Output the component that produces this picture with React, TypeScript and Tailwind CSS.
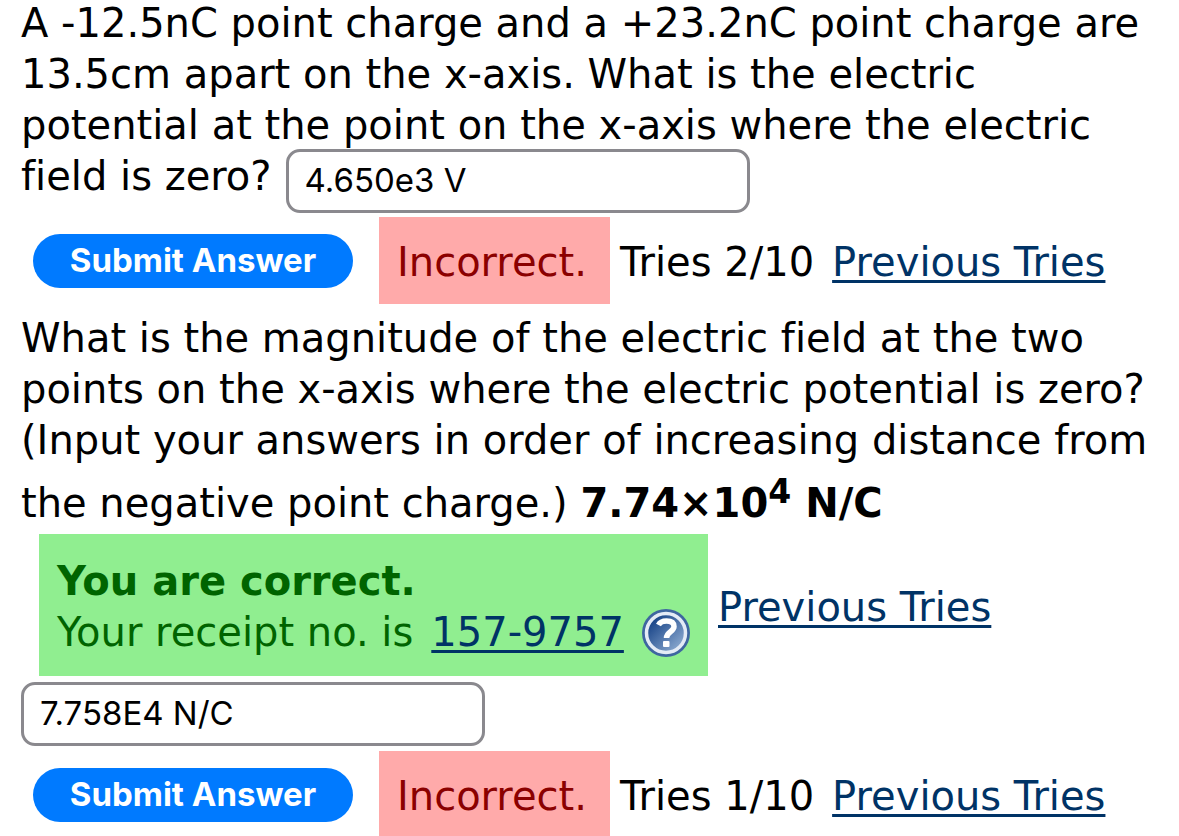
interface AnswerInputProps {
  id: string;
  label: string;
  value: string;
}

interface TriesRowProps {
  tries: string;
}

function AnswerInput({ id, label, value }: AnswerInputProps) {
  return (
    <input
      id={id}
      type="text"
      aria-label={label}
      defaultValue={value}
      className="
      h-16
      w-[464px]
      min-w-0
      rounded-[14px]
      border-3
      border-[#8a898e]
      bg-white
      px-4
      pb-0.5
      font-['Inter',sans-serif]
      text-[33px]
      leading-10
      text-black
      "
    />
  );
}

function TextLink({ children }: { children: string }) {
  return (
    <a
      href="#"
      className="
      text-[#003366]
      underline
      decoration-3
      underline-offset-4
      "
    >
      {children}
    </a>
  );
}

function TriesRow({ tries }: TriesRowProps) {
  return (
    <div className="flex items-baseline pl-3">
      <button
        type="submit"
        className="
        mr-[26px]
        h-[54px]
        w-80
        self-center
        rounded-full
        bg-[#007aff]
        pb-0.5
        font-['Inter',sans-serif]
        text-[33px]
        leading-10
        font-bold
        text-white
        "
      >
        Submit Answer
      </button>

      <div
        className="
        mr-[10px]
        w-[231px]
        bg-[#ffaaaa]
        px-[18px]
        pt-5
        pb-4
        text-[#8b0000]
        "
      >
        Incorrect.
      </div>

      <p className="flex gap-[18px]">
        <span>Tries {tries}</span>
        <TextLink>Previous Tries</TextLink>
      </p>
    </div>
  );
}

function HelpIcon() {
  return (
    <svg
      viewBox="0 0 48 48"
      className="size-12"
      role="img"
      aria-label="Help"
    >
      <defs>
        <linearGradient id="help-fill" x1="0" y1="0" x2="1" y2="1">
          <stop offset="0.2" stopColor="#1f4a8c" />
          <stop offset="1" stopColor="#9fbbdc" />
        </linearGradient>
      </defs>
      <circle cx="24" cy="24" r="24" fill="#3e66a0" />
      <circle cx="24" cy="24" r="19.5" fill="url(#help-fill)" stroke="#e4ebf6" strokeWidth="3.5" />
      <path
        d="M16.500 16c1.500-3 4.500-4 8-4 5 0 7.500 2 7.500 5.500 0 5.500-7.500 5-7.500 11.500"
        fill="none"
        stroke="#fff"
        strokeWidth="5.5"
      />
      <rect x="21" y="32" width="6.500" height="6" rx="1" fill="#fff" />
    </svg>
  );
}

export default function App() {
  return (
    <main
      className="
      -mt-0.5
      bg-white
      pl-[21px]
      font-['DejaVu_Sans',sans-serif]
      text-[40px]
      leading-[51px]
      text-black
      [font-variant-ligatures:no-common-ligatures]
      "
    >
      <form onSubmit={(event) => event.preventDefault()}>
        <p>
          A -12.5nC point charge and a +23.2nC point charge are
          <br />
          13.5cm apart on the x-axis. What is the electric
          <br />
          potential at the point on the x-axis where the electric
        </p>

        <div className="-mt-0.5 mb-1 flex items-start gap-[14px]">
          <label htmlFor="potential" className="pt-0.5">
            field is zero?
          </label>
          <AnswerInput
            id="potential"
            label="Electric potential"
            value="4.650e3 V"
          />
        </div>

        <TriesRow tries="2/10" />
      </form>

      <form
        className="mt-[9px]"
        onSubmit={(event) => event.preventDefault()}
      >
        <p>
          What is the magnitude of the electric field at the two
          <br />
          points on the x-axis where the electric potential is zero?
          <br />
          (Input your answers in order of increasing distance from
          <br />
          the negative point charge.){" "}
          <b>
            7.74×10
            <sup className="static align-super text-[33px] leading-[51px]">4</sup>{" "}
            N/C
          </b>
        </p>

        <div className="mt-[5px] flex items-center gap-[10px] pl-[18px]">
          <div
            className="
            w-[669px]
            bg-[#90ee90]
            px-[18px]
            pt-[22px]
            pb-[18px]
            text-[#006400]
            "
          >
            <b>You are correct.</b>
            <div className="flex items-center justify-between">
              <p className="flex gap-[18px]">
                <span>Your receipt no. is</span>
                <TextLink>157-9757</TextLink>
              </p>
              <HelpIcon />
            </div>
          </div>

          <p className="pt-1">
            <TextLink>Previous Tries</TextLink>
          </p>
        </div>

        <div className="mt-1.5 mb-[5px] flex">
          <AnswerInput
            id="field"
            label="Electric field magnitude"
            value="7.758E4 N/C"
          />
        </div>

        <TriesRow tries="1/10" />
      </form>
    </main>
  );
}
